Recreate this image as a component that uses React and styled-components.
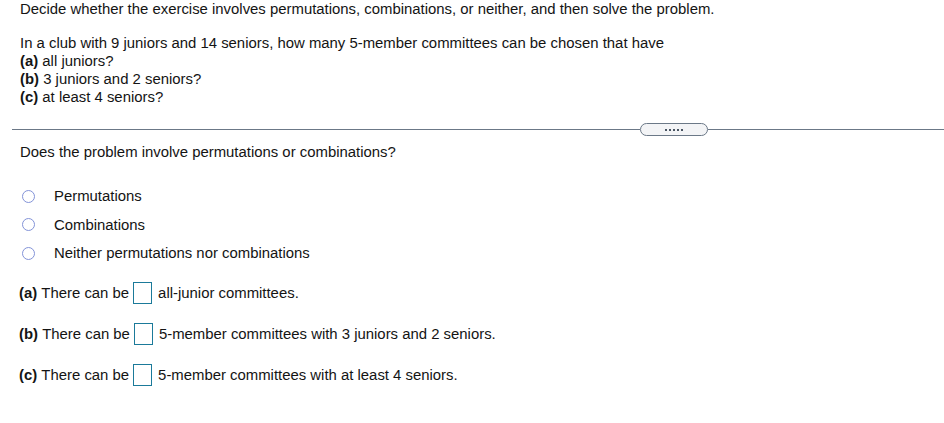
import React from "react";
import styled, { createGlobalStyle } from "styled-components";

const Global = createGlobalStyle`
  html, body { margin: 0; padding: 0; background: #fff; }
  body { font-family: "Liberation Sans", Arial, sans-serif; font-size: 14.9px; color: #141414; }
`;

const Page = styled.div`
  width: 944px;
  height: 423px;
  overflow: hidden;
  background: #fff;
`;

const Question = styled.div`
  padding: 0 20px;
  line-height: 18px;
`;

const Para = styled.p`
  margin: ${(p) => p.$mt || 0}px 0 0 0;
`;

const Line = styled.div``;

const B = styled.b`
  font-weight: bold;
`;

const Divider = styled.div`
  margin-top: 17px;
  margin-left: 12px;
  display: flex;
  align-items: center;
  height: 13px;
`;

const Rule = styled.div`
  height: 1px;
  background: #6b7887;
  flex: ${(p) => (p.$grow ? 1 : "none")};
  width: ${(p) => (p.$w ? p.$w + "px" : "auto")};
`;

const Pill = styled.div`
  width: 66px;
  height: 11px;
  border: 1px solid #6b7887;
  border-radius: 7px;
  background: #f3f4f6;
  display: flex;
  align-items: center;
  justify-content: center;
  gap: 2px;
`;

const Dot = styled.span`
  width: 2px;
  height: 2px;
  background: #4a5563;
`;

const Body = styled.div`
  padding: 7px 20px 0 20px;
  line-height: 18px;
`;

const Prompt = styled.div``;

const Options = styled.div`
  margin-top: 26px;
  display: flex;
  flex-direction: column;
  gap: 10.5px;
`;

const Option = styled.label`
  display: flex;
  align-items: center;
  height: 18px;
`;

const Radio = styled.span`
  width: 11px;
  height: 11px;
  border: 1.5px solid #8393d8;
  border-radius: 50%;
  margin-left: 2px;
  margin-right: 19px;
`;

const Answers = styled.div`
  margin-top: 20px;
  display: flex;
  flex-direction: column;
  gap: 19px;
  margin-left: -1px;
`;

const AnswerRow = styled.div`
  display: flex;
  align-items: center;
  height: 22px;
`;

const Box = styled.span`
  display: inline-block;
  width: 17px;
  height: 20px;
  border: 1px solid #1b7a9a;
  margin: 0 6px 0 4px;
  flex: none;
`;

export default function App() {
  return (
    <Page>
      <Global />
      <Question>
        <Para>
          Decide whether the exercise involves permutations, combinations, or neither, and then solve the problem.
        </Para>
        <Para $mt={16}>
          <Line>In a club with 9 juniors and 14 seniors, how many 5-member committees can be chosen that have</Line>
          <Line>
            <B>(a)</B> all juniors?
          </Line>
          <Line>
            <B>(b)</B> 3 juniors and 2 seniors?
          </Line>
          <Line>
            <B>(c)</B> at least 4 seniors?
          </Line>
        </Para>
      </Question>
      <Divider>
        <Rule $w={628} />
        <Pill>
          {[0, 1, 2, 3, 4].map((i) => (
            <Dot key={i} />
          ))}
        </Pill>
        <Rule $grow />
      </Divider>
      <Body>
        <Prompt>Does the problem involve permutations or combinations?</Prompt>
        <Options>
          <Option>
            <Radio />
            Permutations
          </Option>
          <Option>
            <Radio />
            Combinations
          </Option>
          <Option>
            <Radio />
            Neither permutations nor combinations
          </Option>
        </Options>
        <Answers>
          <AnswerRow>
            <B>(a)</B>&nbsp;There can be<Box />all-junior committees.
          </AnswerRow>
          <AnswerRow>
            <B>(b)</B>&nbsp;There can be<Box />5-member committees with 3 juniors and 2 seniors.
          </AnswerRow>
          <AnswerRow>
            <B>(c)</B>&nbsp;There can be<Box />5-member committees with at least 4 seniors.
          </AnswerRow>
        </Answers>
      </Body>
    </Page>
  );
}
